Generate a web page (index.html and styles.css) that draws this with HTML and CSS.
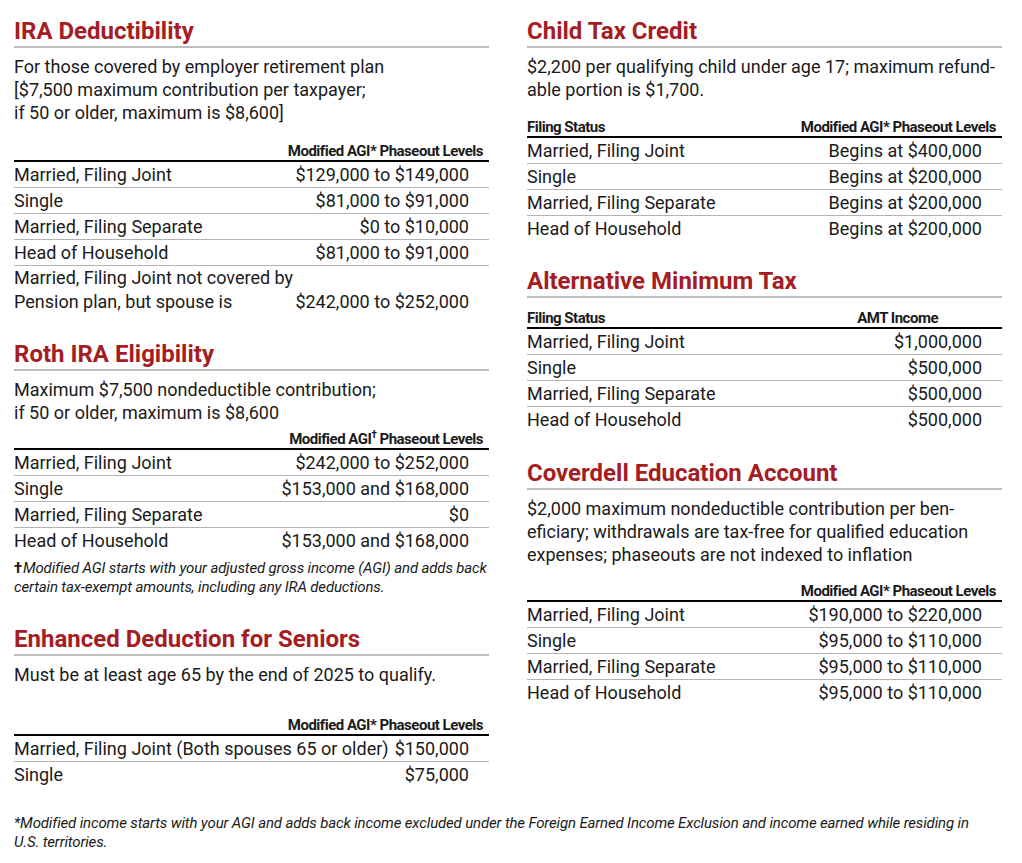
FILE: index.html
```html
<!DOCTYPE html>
<html lang="en">
<head>
<meta charset="utf-8">
<title>Tax Reference</title>
<link rel="stylesheet" href="styles.css">
</head>
<body>
<div class="page">
  <div class="col">
    <section class="sec sec-ira">
      <h2 class="title">IRA Deductibility</h2>
      <p class="desc">For those covered by employer retirement plan<br>[$7,500 maximum contribution per taxpayer;<br>if 50 or older, maximum is $8,600]</p>
      <div class="tbl">
        <div class="thead"><span class="th-r">Modified AGI* Phaseout Levels</span></div>
        <div class="row"><span>Married, Filing Joint</span><span class="v">$129,000 to $149,000</span></div>
        <div class="row"><span>Single</span><span class="v">$81,000 to $91,000</span></div>
        <div class="row"><span>Married, Filing Separate</span><span class="v">$0 to $10,000</span></div>
        <div class="row"><span>Head of Household</span><span class="v">$81,000 to $91,000</span></div>
        <div class="row row-multi last"><span>Married, Filing Joint not covered by<br>Pension plan, but spouse is</span><span class="v">$242,000 to $252,000</span></div>
      </div>
    </section>

    <section class="sec sec-roth">
      <h2 class="title">Roth IRA Eligibility</h2>
      <p class="desc">Maximum $7,500 nondeductible contribution;<br>if 50 or older, maximum is $8,600</p>
      <div class="tbl">
        <div class="thead"><span class="th-r">Modified AGI<sup>†</sup> Phaseout Levels</span></div>
        <div class="row"><span>Married, Filing Joint</span><span class="v">$242,000 to $252,000</span></div>
        <div class="row"><span>Single</span><span class="v">$153,000 and $168,000</span></div>
        <div class="row"><span>Married, Filing Separate</span><span class="v">$0</span></div>
        <div class="row last"><span>Head of Household</span><span class="v">$153,000 and $168,000</span></div>
      </div>
      <p class="note"><b class="dag">†</b>Modified AGI starts with your adjusted gross income (AGI) and adds back certain tax-exempt amounts, including any IRA deductions.</p>
    </section>

    <section class="sec sec-sen">
      <h2 class="title">Enhanced Deduction for Seniors</h2>
      <p class="desc">Must be at least age 65 by the end of 2025 to qualify.</p>
      <div class="tbl">
        <div class="thead"><span class="th-r">Modified AGI* Phaseout Levels</span></div>
        <div class="row"><span>Married, Filing Joint (Both spouses 65 or older)</span><span class="v">$150,000</span></div>
        <div class="row last"><span>Single</span><span class="v">$75,000</span></div>
      </div>
    </section>
  </div>

  <div class="col">
    <section class="sec sec-ctc">
      <h2 class="title">Child Tax Credit</h2>
      <p class="desc">$2,200 per qualifying child under age 17; maximum refund-<br>able portion is $1,700.</p>
      <div class="tbl">
        <div class="thead"><span class="th-l">Filing Status</span><span class="th-r">Modified AGI* Phaseout Levels</span></div>
        <div class="row"><span>Married, Filing Joint</span><span class="v">Begins at $400,000</span></div>
        <div class="row"><span>Single</span><span class="v">Begins at $200,000</span></div>
        <div class="row"><span>Married, Filing Separate</span><span class="v">Begins at $200,000</span></div>
        <div class="row last"><span>Head of Household</span><span class="v">Begins at $200,000</span></div>
      </div>
    </section>

    <section class="sec sec-amt">
      <h2 class="title">Alternative Minimum Tax</h2>
      <div class="tbl">
        <div class="thead"><span class="th-l">Filing Status</span><span class="th-r th-amt">AMT Income</span></div>
        <div class="row"><span>Married, Filing Joint</span><span class="v">$1,000,000</span></div>
        <div class="row"><span>Single</span><span class="v">$500,000</span></div>
        <div class="row"><span>Married, Filing Separate</span><span class="v">$500,000</span></div>
        <div class="row last"><span>Head of Household</span><span class="v">$500,000</span></div>
      </div>
    </section>

    <section class="sec sec-cov">
      <h2 class="title">Coverdell Education Account</h2>
      <p class="desc">$2,000 maximum nondeductible contribution per ben-<br>eficiary; withdrawals are tax-free for qualified education<br>expenses; phaseouts are not indexed to inflation</p>
      <div class="tbl">
        <div class="thead"><span class="th-r">Modified AGI* Phaseout Levels</span></div>
        <div class="row"><span>Married, Filing Joint</span><span class="v">$190,000 to $220,000</span></div>
        <div class="row"><span>Single</span><span class="v">$95,000 to $110,000</span></div>
        <div class="row"><span>Married, Filing Separate</span><span class="v">$95,000 to $110,000</span></div>
        <div class="row last"><span>Head of Household</span><span class="v">$95,000 to $110,000</span></div>
      </div>
    </section>
  </div>
</div>
<p class="foot">*Modified income starts with your AGI and adds back income excluded under the Foreign Earned Income Exclusion and income earned while residing in U.S. territories.</p>
</body>
</html>
```

FILE: styles.css
```css
html, body {
  margin: 0;
  padding: 0;
  background: #ffffff;
}
body {
  font-family: Roboto, "Liberation Sans", sans-serif;
  color: #1a1a1a;
  width: 1022px;
}
.page {
  display: grid;
  grid-template-columns: 475px 475px;
  column-gap: 38px;
  padding: 18px 20px 0 14px;
}
.col {
  display: flex;
  flex-direction: column;
}
.title {
  margin: 0;
  font-size: 24px;
  line-height: 26px;
  font-weight: 700;
  color: #a51d23;
  padding-bottom: 2px;
  border-bottom: 2px solid #bdbdbd;
}
.desc {
  margin: 7px 0 0;
  font-size: 18px;
  line-height: 23px;
}
.tbl {
  display: flex;
  flex-direction: column;
  font-size: 18px;
}
.thead {
  display: flex;
  justify-content: space-between;
  align-items: flex-end;
  font-size: 15px;
  line-height: 17px;
  font-weight: 700;
  letter-spacing: -0.5px;
  border-bottom: 2px solid #000;
  white-space: nowrap;
}
.th-r {
  margin-left: auto;
  padding-right: 6px;
}
.th-amt { padding-right: 64px; }
.thead sup {
  font-size: 10px;
  line-height: 0;
}
.row {
  display: flex;
  justify-content: space-between;
  align-items: flex-end;
  height: 25px;
  line-height: 24px;
  border-bottom: 1px solid #b3b3b3;
  white-space: nowrap;
}
.row-multi {
  height: auto;
}
.row .v {
  padding-right: 20px;
}
.row.last { border-bottom: none; }
.note {
  margin: 6px 0 0;
  font-size: 15px;
  line-height: 19px;
  font-style: italic;
  letter-spacing: -0.15px;
}
.dag {
  font-style: normal;
  margin-right: 1px;
}

.sec-ira .tbl { margin-top: 19px; }
.sec-roth { margin-top: 27px; }
.sec-roth .tbl { margin-top: 7px; }
.sec-sen { margin-top: 29px; }
.sec-sen .tbl { margin-top: 31px; }
.sec-ctc .tbl { margin-top: 18px; }
.sec-amt { margin-top: 27px; }
.sec-amt .tbl { margin-top: 12px; }
.sec-cov { margin-top: 28px; }
.sec-cov .tbl { margin-top: 17px; }

.foot {
  width: 975px;
  margin: 27px 0 0 14px;
  font-size: 15px;
  line-height: 19px;
  font-style: italic;
  letter-spacing: -0.15px;
}
```
